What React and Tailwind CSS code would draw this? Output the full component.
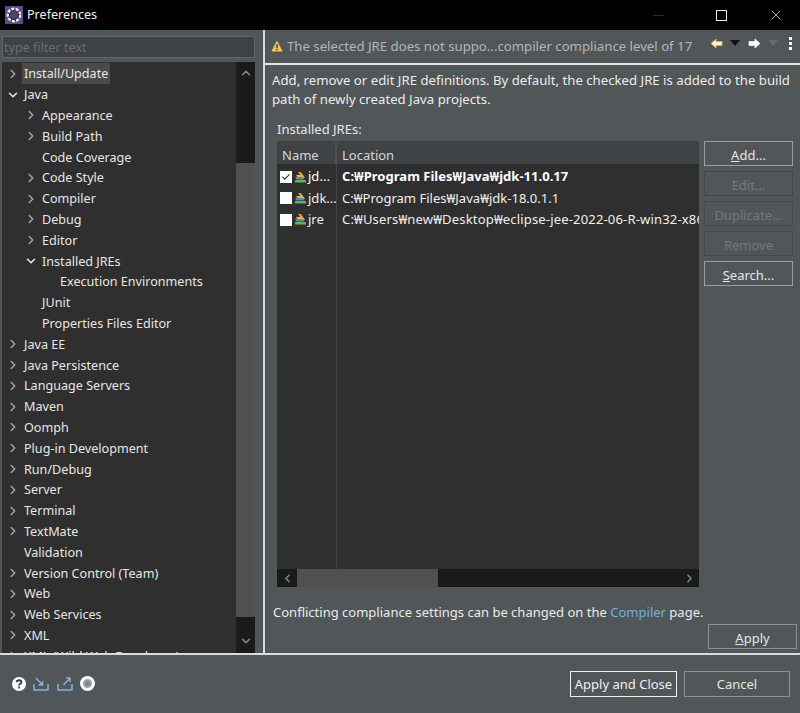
import { ChevronRight, ChevronDown, ChevronUp, ChevronLeft, X, Check } from "lucide-react";

const treeItems = [
  { label: "Install/Update", arrow: "right", depth: 0, selected: true },
  { label: "Java", arrow: "down", depth: 0 },
  { label: "Appearance", arrow: "right", depth: 1 },
  { label: "Build Path", arrow: "right", depth: 1 },
  { label: "Code Coverage", depth: 1 },
  { label: "Code Style", arrow: "right", depth: 1 },
  { label: "Compiler", arrow: "right", depth: 1 },
  { label: "Debug", arrow: "right", depth: 1 },
  { label: "Editor", arrow: "right", depth: 1 },
  { label: "Installed JREs", arrow: "down", depth: 1 },
  { label: "Execution Environments", depth: 2 },
  { label: "JUnit", depth: 1 },
  { label: "Properties Files Editor", depth: 1 },
  { label: "Java EE", arrow: "right", depth: 0 },
  { label: "Java Persistence", arrow: "right", depth: 0 },
  { label: "Language Servers", arrow: "right", depth: 0 },
  { label: "Maven", arrow: "right", depth: 0 },
  { label: "Oomph", arrow: "right", depth: 0 },
  { label: "Plug-in Development", arrow: "right", depth: 0 },
  { label: "Run/Debug", arrow: "right", depth: 0 },
  { label: "Server", arrow: "right", depth: 0 },
  { label: "Terminal", arrow: "right", depth: 0 },
  { label: "TextMate", arrow: "right", depth: 0 },
  { label: "Validation", depth: 0 },
  { label: "Version Control (Team)", arrow: "right", depth: 0 },
  { label: "Web", arrow: "right", depth: 0 },
  { label: "Web Services", arrow: "right", depth: 0 },
  { label: "XML", arrow: "right", depth: 0 },
  { label: "XML (Wild Web Developer)", arrow: "right", depth: 0 },
];

const depthClass = ["pl-[4px]", "pl-[22px]", "pl-[40px]"];

const jres = [
  { name: "jd...", location: "C:₩Program Files₩Java₩jdk-11.0.17", checked: true },
  { name: "jdk...", location: "C:₩Program Files₩Java₩jdk-18.0.1.1" },
  { name: "jre", location: "C:₩Users₩new₩Desktop₩eclipse-jee-2022-06-R-win32-x86", wide: true },
];

function AppLogo() {
  return (
    <svg width="18" height="18" viewBox="0 0 18 18">
      <rect width="18" height="18" fill="#5e4b8f" />
      <circle cx="9" cy="9" r="6.2" fill="#2a2438" stroke="#f0eef4" strokeWidth="2.4" strokeDasharray="3 1.3" />
      <circle cx="9" cy="9" r="4" fill="#4d4570" />
    </svg>
  );
}

function TreeRow({ item }) {
  return (
    <div className={`flex h-[20.8px] shrink-0 items-center whitespace-nowrap ${depthClass[item.depth]}`}>
      <span className="flex w-[14px] shrink-0 justify-center">
        {item.arrow === "right" && <ChevronRight size={16} strokeWidth={2.6} className="text-[#a4a4a4]" />}
        {item.arrow === "down" && <ChevronDown size={16} strokeWidth={2.6} className="text-[#e8e8e8]" />}
      </span>
      <span className={`ml-[2px] px-[2px] pt-px leading-[20px] ${item.selected ? "bg-[#4a4a4a]" : ""}`}>{item.label}</span>
    </div>
  );
}

function SideButton({ children, disabled }) {
  return (
    <button
      className={`h-[25px] w-[89px] border pt-[3px] text-center text-[13px] leading-[20px] ${
        disabled ? "border-[#45494b] text-[#757a7c]" : "border-[#9a9fa1] text-[#e6e6e6]"
      }`}
    >
      {children}
    </button>
  );
}

function JreIcon() {
  return (
    <svg width="11" height="11" viewBox="0 0 11 11" className="shrink-0">
      <path d="M3 0 H6 L8 3 H5 Z" fill="#e8992c" />
      <path d="M1 3 H8 L10 6 H3 Z" fill="#f0b23a" />
      <path d="M0 5 H8 L9.5 7.5 H1.5 Z" fill="#3f94c4" />
      <path d="M0 8 H11 V10.5 H0 Z" fill="#6fae4e" />
    </svg>
  );
}

function JreRow({ jre }) {
  return (
    <div className={`flex h-[21.3px] items-center whitespace-nowrap text-[13.05px] ${jre.checked ? "font-bold text-white" : "text-[#efefef]"}`}>
      <div className="flex w-[59px] shrink-0 items-center pl-[3px]">
        <span className="flex h-[12px] w-[12px] shrink-0 items-center justify-center bg-white">
          {jre.checked && <Check size={10} strokeWidth={2.5} className="text-[#222]" />}
        </span>
        <span className="ml-[3px]"><JreIcon /></span>
        <span className="ml-[2px] font-normal">{jre.name}</span>
      </div>
      <div className={`ml-[6px] ${jre.wide ? "tracking-[0.15px]" : ""}`}>{jre.location}</div>
    </div>
  );
}

function ToolbarArrow({ color, stroke, flip }) {
  return (
    <svg width="13" height="11" viewBox="0 0 13 11" className={flip ? "-scale-x-100" : ""}>
      <path d="M1 5.5 L6 1 V3.5 H12 V7.5 H6 V10 Z" fill={color} stroke={stroke} strokeWidth="1" />
    </svg>
  );
}

function Caret({ color }) {
  return (
    <svg width="10" height="6" viewBox="0 0 10 6">
      <path d="M0 0 H10 L5 6 Z" fill={color} />
    </svg>
  );
}

export default function App() {
  return (
    <div className="flex h-[713px] w-[800px] flex-col overflow-hidden bg-[#515658] font-['Noto_Sans','Open_Sans',sans-serif] text-[12.6px] text-[#e6e6e6]">
      {/* title bar */}
      <div className="flex h-[30px] shrink-0 items-center bg-black pl-[5px] text-[#f0f0f0]">
        <AppLogo />
        <span className="ml-[4px] pt-px">Preferences</span>
        <div className="ml-auto flex items-center">
          <div className="mr-[52px] h-px w-[11px] bg-[#2e2e2e]" />
          <div className="mr-[41px] h-[11px] w-[11px] border border-[#e8e8e8]" />
          <X size={16} strokeWidth={1.1} className="mr-[16px] text-[#f0f0f0]" />
        </div>
      </div>

      <div className="flex min-h-0 flex-1">
        {/* left side */}
        <div className="flex w-[263px] shrink-0 flex-col pl-[2px] pr-[8px] pt-[6px]">
          <div className="flex h-[22px] shrink-0 items-center border border-[#5f6466] bg-[#3f4244] pl-[1px] pt-[2px] text-[#6a6e70]">
            type filter text
          </div>
          <div className="mt-[4px] flex min-h-0 flex-1 bg-[#2f2f2f]">
            <div className="flex min-w-0 flex-1 flex-col overflow-hidden pt-[1.5px]">
              {treeItems.map((item) => (
                <TreeRow key={item.label} item={item} />
              ))}
            </div>
            <div className="flex w-[19px] shrink-0 flex-col bg-[#1a1a1a]">
              <div className="flex h-[101px] shrink-0 justify-center pt-[4px]">
                <ChevronUp size={14} strokeWidth={2.5} className="text-[#8a8a8a]" />
              </div>
              <div className="h-[454px] shrink-0 bg-[#505050]" />
              <div className="flex flex-1 items-end justify-center pb-[5px]">
                <ChevronDown size={14} strokeWidth={2.5} className="text-[#8a8a8a]" />
              </div>
            </div>
          </div>
        </div>

        {/* right side */}
        <div className="flex min-w-0 flex-1 flex-col border-l-2 border-[#d9dcdd]">
          <div className="flex h-[35px] shrink-0 items-center border-b-2 border-[#e4e6e7] pb-[2px] pl-[6px]">
            <svg width="12" height="12" viewBox="0 0 12 12" className="shrink-0">
              <path d="M6 0.5 L11.7 11.5 H0.3 Z" fill="#f2c55c" />
              <rect x="5.3" y="4" width="1.4" height="4.2" fill="#3a3a3a" />
              <rect x="5.3" y="9" width="1.4" height="1.4" fill="#3a3a3a" />
            </svg>
            <span className="ml-[4px] whitespace-nowrap pt-[3px] text-[13.2px] text-[#b3b6b7]">The selected JRE does not suppo...compiler compliance level of 17</span>
            <div className="ml-auto flex items-center pb-[5px] pr-[8px]">
              <ToolbarArrow color="#fff3d6" stroke="#e8a93a" />
              <span className="ml-[7px]"><Caret color="#111" /></span>
              <span className="ml-[8px]"><ToolbarArrow color="#fff" stroke="#e8e8e8" flip /></span>
              <span className="ml-[7px]"><Caret color="#666b6d" /></span>
              <div className="ml-[11px] flex flex-col gap-[2px]">
                <span className="h-[3px] w-[3px] bg-white" />
                <span className="h-[3px] w-[3px] bg-white" />
                <span className="h-[3px] w-[3px] bg-white" />
              </div>
            </div>
          </div>

          <div className="flex min-h-0 flex-1 flex-col pl-[7px] pr-[3px]">
            <p className="mt-[6px] text-[13.2px] leading-[19px] text-[#ececec]">
              Add, remove or edit JRE definitions. By default, the checked JRE is added to the build path of newly created Java projects.
            </p>
            <div className="ml-[5px] mt-[10px] text-[13px] leading-[20px]">Installed JREs:</div>
            <div className="mt-[2px] flex pl-[5px]">
              <div className="flex h-[446px] w-[422px] shrink-0 flex-col overflow-hidden bg-[#2f2f2f]">
                <div className="flex h-[23px] shrink-0 items-center bg-[#3f4345] text-[13px] text-[#d5d7d8]">
                  <div className="h-[23px] w-[60px] border-r-2 border-[#4c5052] pl-[5px] pt-[4px] leading-[20px]">Name</div>
                  <div className="pl-[5px] pt-[4px] leading-[20px]">Location</div>
                </div>
                <div className="relative min-h-0 flex-1 overflow-hidden pt-[2.5px]">
                  <div className="absolute bottom-0 left-[59px] top-0 w-px bg-[#444444]" />
                  {jres.map((jre) => (
                    <JreRow key={jre.name} jre={jre} />
                  ))}
                </div>
                <div className="flex h-[18px] shrink-0 bg-[#1a1a1a]">
                  <div className="flex w-[20px] items-center justify-center">
                    <ChevronLeft size={13} strokeWidth={2.5} className="text-[#8a8a8a]" />
                  </div>
                  <div className="w-[141px] bg-[#505050]" />
                  <div className="flex flex-1 items-center justify-end pr-[3px]">
                    <ChevronRight size={13} strokeWidth={2.5} className="text-[#8a8a8a]" />
                  </div>
                </div>
              </div>
              <div className="ml-[5px] flex flex-col gap-[5px]">
                <SideButton><span className="underline">A</span>dd...</SideButton>
                <SideButton disabled>Edit...</SideButton>
                <SideButton disabled>Duplicate...</SideButton>
                <SideButton disabled>Remove</SideButton>
                <SideButton><span className="underline">S</span>earch...</SideButton>
              </div>
            </div>
            <div className="mt-[15px] pl-px text-[13.03px] leading-[20px] text-[#ececec]">
              Conflicting compliance settings can be changed on the <span className="text-[#6fb3d9]">Compiler</span> page.
            </div>
            <div className="mt-[2px] flex justify-end">
              <button className="h-[25px] w-[89px] border border-[#8d9294] pt-[3px] text-[13px] leading-[20px]"><span className="underline">A</span>pply</button>
            </div>
          </div>
        </div>
      </div>

      {/* footer */}
      <div className="flex h-[60px] shrink-0 items-center border-t-2 border-[#d9dcdd] pb-[1px] pl-[12px]">
        <svg width="14" height="14" viewBox="0 0 14 14">
          <circle cx="7" cy="7" r="7" fill="#fff" />
          <path d="M4.6 5.2 C4.8 2.6 9.4 2.6 9.4 5.2 C9.4 6.9 7 6.8 7 8.6" fill="none" stroke="#33383a" strokeWidth="1.8" />
          <rect x="6.1" y="9.6" width="1.8" height="1.8" fill="#33383a" />
        </svg>
        <svg width="16" height="14" viewBox="0 0 16 14" className="ml-[7px]" fill="none" stroke="#86aedd" strokeWidth="1.5">
          <path d="M1 7 V13 H15 V7" />
          <path d="M3 1 L9.5 8 M9.5 4 V8 H5.5" />
        </svg>
        <svg width="16" height="14" viewBox="0 0 16 14" className="ml-[8px]" fill="none" stroke="#86aedd" strokeWidth="1.5">
          <path d="M1 7 V13 H15 V7" />
          <path d="M6.5 8 L13 1 M9 1 H13 V5" />
        </svg>
        <svg width="15" height="15" viewBox="0 0 15 15" className="ml-[7px]">
          <circle cx="7.5" cy="7.5" r="7.5" fill="#fff" />
          <circle cx="7.5" cy="7.5" r="4.6" fill="#a2a6a8" />
          <circle cx="7.5" cy="7.5" r="2.8" fill="#85898c" />
        </svg>
        <div className="ml-auto flex items-center pr-[10px]">
          <button className="h-[26px] w-[107px] whitespace-nowrap border border-[#f0f0f0] pt-[3px] text-[13px] text-[#f0f0f0]">Apply and Close</button>
          <button className="ml-[7px] h-[26px] w-[106px] border border-[#8d9294] pt-[3px] text-[13px]">Cancel</button>
        </div>
      </div>
    </div>
  );
}
